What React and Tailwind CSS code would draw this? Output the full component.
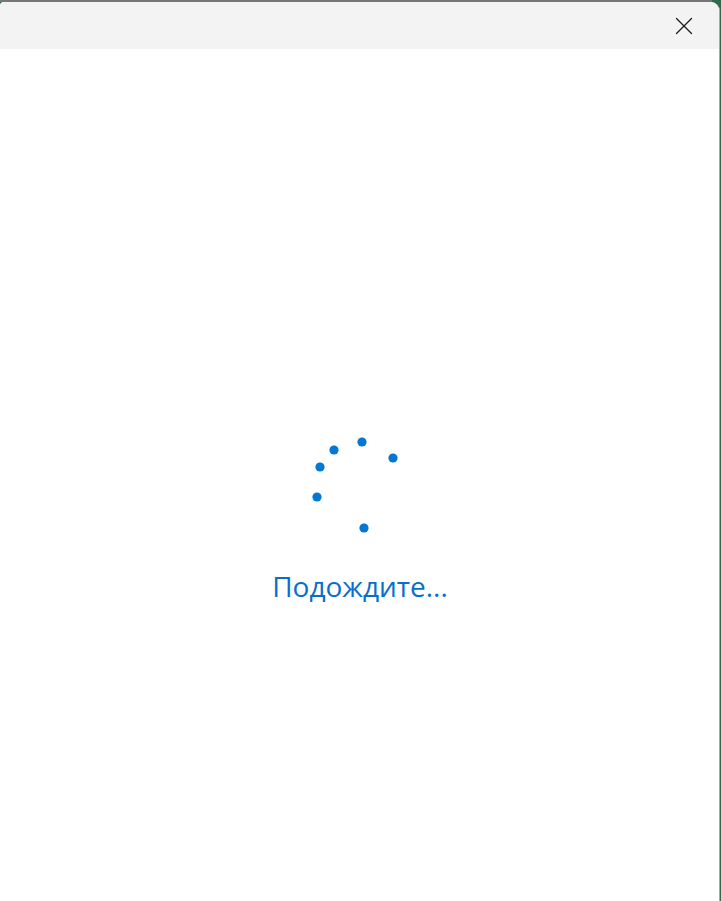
import { X } from 'lucide-react';

// spinner dot positions, relative to a 100x100 box centred on the ring
const DOTS = [
  [52, 6],
  [83, 22],
  [24, 14],
  [10, 31],
  [7, 61],
  [54, 92],
];

function Spinner() {
  return (
    <svg width="100" height="100" viewBox="0 0 100 100" className="block">
      {DOTS.map(([cx, cy], i) => (
        <circle key={i} cx={cx} cy={cy} r="4.6" fill="#0078d4" />
      ))}
    </svg>
  );
}

export default function App() {
  return (
    <div className="flex h-[901px] w-[721px] flex-col bg-[#2f6b4d]">
      <div className="h-[2px] w-[712px] bg-[#777777]" />
      <div className="flex flex-1 pr-px">
        <div className="flex flex-1 flex-col overflow-hidden rounded-tl-[4px] rounded-tr-[9px] border-r border-[#a9a9a9] bg-white">
          {/* Title bar */}
          <div className="flex h-[47px] items-center justify-end bg-[#f3f3f3] pr-[20px]">
            <button className="flex h-[30px] w-[30px] items-center justify-center text-[#1a1a1a]">
              <X size={30} strokeWidth={1} />
            </button>
          </div>

          {/* Content */}
          <div className="flex flex-1 flex-col items-center pl-px pt-[387px]">
            <Spinner />
            <p
              className="mt-[32px] text-[28px] leading-[36px] text-[#0a6ecb]"
              style={{ fontFamily: '"Open Sans", "Noto Sans", sans-serif' }}
            >
              Подождите...
            </p>
          </div>
        </div>
      </div>
    </div>
  );
}
